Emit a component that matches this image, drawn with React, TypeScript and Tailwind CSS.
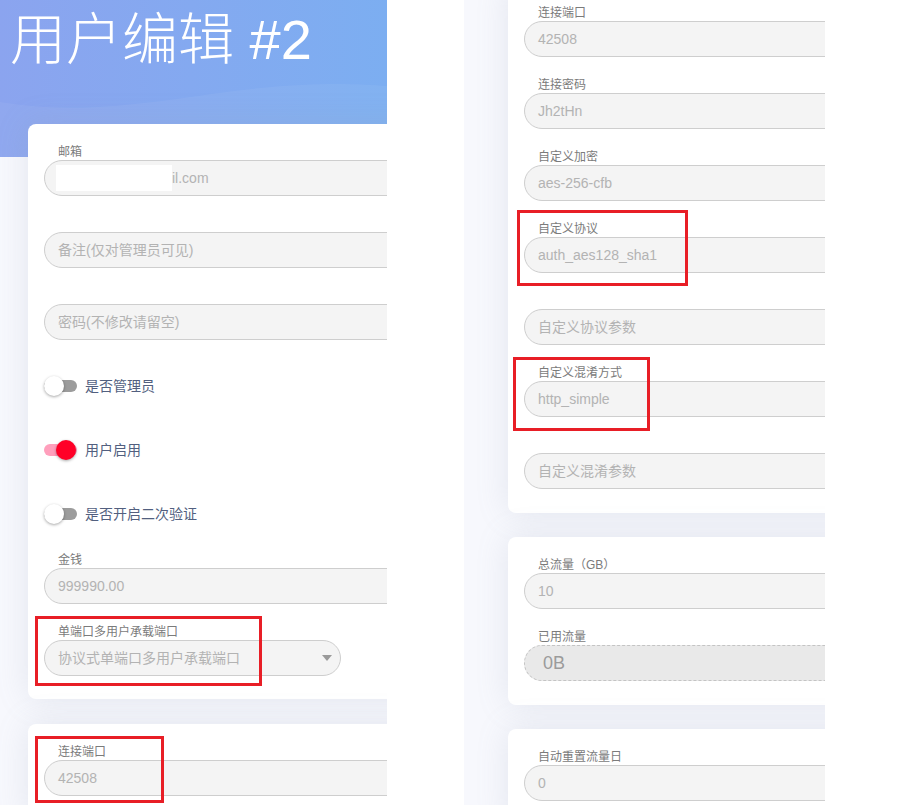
import React from "react";

function Label({ children }: { children: React.ReactNode }) {
  return (
    <div className="h-[16px] pl-[14px] text-[12px] leading-[16px] text-[#7b7b7b] whitespace-nowrap">
      {children}
    </div>
  );
}

function Input({ text, className = "" }: { text: React.ReactNode; className?: string }) {
  return (
    <div
      className={
        "h-[36px] rounded-full border border-[#cecece] bg-[#f4f4f4] flex items-center pl-[13px] text-[14px] text-[#b3b3b3] whitespace-nowrap " +
        className
      }
    >
      {text}
    </div>
  );
}

function Toggle({ on, label, className = "" }: { on: boolean; label: string; className?: string }) {
  return (
    <div className={"h-[24px] flex items-center " + className}>
      <div className="relative w-[33px] h-[20px]">
        <div
          className={
            "absolute left-0 top-[4px] w-[33px] h-[12px] rounded-full " +
            (on ? "bg-[#ff9fbc]" : "bg-[#9c9c9c]")
          }
        />
        <div
          className={
            "absolute top-0 w-[20px] h-[20px] rounded-full shadow-[0_1px_3px_rgba(0,0,0,0.35)] " +
            (on ? "left-[12px] bg-[#ff0027]" : "left-0 bg-white")
          }
        />
      </div>
      <span className="ml-[8px] text-[14px] text-[#525f7f] leading-[20px]">{label}</span>
    </div>
  );
}

const card = "relative bg-white rounded-[8px] shadow-[0_0_32px_0_rgba(136,152,170,0.18)]";

export default function App() {
  return (
    <div className="relative w-[909px] h-[805px] bg-white flex overflow-hidden font-['Liberation_Sans','Noto_Sans_CJK_SC',sans-serif]">
      {/* Left screenshot */}
      <div className="w-[387px] h-[805px] shrink-0 overflow-hidden bg-[#f7f8fd]">
        <div className="relative h-[157px] bg-gradient-to-r from-[#8ba4ef] to-[#7caef1] overflow-hidden">
          <svg className="absolute left-0 top-0" width="387" height="157" viewBox="0 0 387 157">
            <path d="M0 102 C 90 118, 180 96, 260 88 C 320 82, 360 84, 387 86 L387 157 L0 157 Z" fill="#ffffff" fillOpacity="0.05" />
          </svg>
          <div className="relative pl-[10px] pt-[8px] text-[56px] leading-[64px] font-light text-white whitespace-nowrap font-['Liberation_Sans','Noto_Sans_CJK_SC',sans-serif]">
            用户编辑 #2
          </div>
        </div>

        <div className={card + " -mt-[33px] ml-[28px] w-[420px] pt-[20px] pb-[23px] pl-[16px] pr-[16px]"}>
          <Label>邮箱</Label>
          <Input
            text={
              <>
                <span className="ml-[-2px] w-[116px] h-[26px] bg-white shrink-0" />
                <span>il.com</span>
              </>
            }
          />
          <Input className="mt-[36px]" text="备注(仅对管理员可见)" />
          <Input className="mt-[36px]" text="密码(不修改请留空)" />
          <Toggle className="mt-[34px]" on={false} label="是否管理员" />
          <Toggle className="mt-[40px]" on={true} label="用户启用" />
          <Toggle className="mt-[40px]" on={false} label="是否开启二次验证" />
          <div className="mt-[26px]">
            <Label>金钱</Label>
          </div>
          <Input text="999990.00" />
          <div className="mt-[20px]">
            <Label>单端口多用户承载端口</Label>
          </div>
          <div className="w-[297px] h-[36px] rounded-full border border-[#cecece] bg-[#f4f4f4] flex items-center justify-between pl-[13px] pr-[8px] text-[14px] text-[#b3b3b3] whitespace-nowrap">
            <span>协议式单端口多用户承载端口</span>
            <svg width="10" height="6" viewBox="0 0 10 6">
              <path d="M0 0 L10 0 L5 6 Z" fill="#9a9a9a" />
            </svg>
          </div>
        </div>

        <div className={card + " mt-[25px] ml-[28px] w-[420px] pt-[20px] pb-[23px] pl-[16px] pr-[16px]"}>
          <Label>连接端口</Label>
          <Input text="42508" />
        </div>
      </div>

      {/* Right screenshot */}
      <div className="ml-[77px] w-[361px] h-[805px] shrink-0 overflow-hidden bg-[#f7f8fd]">
        <div className={card + " -mt-[15px] ml-[44px] w-[400px] pt-[20px] pb-[24px] pl-[16px] pr-[16px]"}>
          <Label>连接端口</Label>
          <Input text="42508" />
          <div className="mt-[20px]">
            <Label>连接密码</Label>
          </div>
          <Input text="Jh2tHn" />
          <div className="mt-[20px]">
            <Label>自定义加密</Label>
          </div>
          <Input text="aes-256-cfb" />
          <div className="mt-[20px]">
            <Label>自定义协议</Label>
          </div>
          <Input text="auth_aes128_sha1" />
          <Input className="mt-[36px]" text="自定义协议参数" />
          <div className="mt-[20px]">
            <Label>自定义混淆方式</Label>
          </div>
          <Input text="http_simple" />
          <Input className="mt-[36px]" text="自定义混淆参数" />
        </div>

        <div className={card + " mt-[24px] ml-[44px] w-[400px] pt-[20px] pb-[24px] pl-[16px] pr-[16px]"}>
          <Label>总流量（GB）</Label>
          <Input text="10" />
          <div className="mt-[20px]">
            <Label>已用流量</Label>
          </div>
          <div className="h-[36px] rounded-full border border-dashed border-[#c4c4c4] bg-[#e9e9e9] flex items-center pl-[18px] text-[18px] text-[#9b9b9b]">
            0B
          </div>
        </div>

        <div className={card + " mt-[24px] ml-[44px] w-[400px] pt-[20px] pb-[24px] pl-[16px] pr-[16px]"}>
          <Label>自动重置流量日</Label>
          <Input text="0" />
        </div>
      </div>

      {/* Red annotation boxes */}
      <div className="absolute left-[35px] top-[616px] w-[227px] h-[70px] border-[3px] border-[#e81e26]" />
      <div className="absolute left-[35px] top-[736px] w-[129px] h-[67px] border-[3px] border-[#e81e26]" />
      <div className="absolute left-[517px] top-[210px] w-[171px] h-[76px] border-[3px] border-[#e81e26]" />
      <div className="absolute left-[513px] top-[357px] w-[137px] h-[74px] border-[3px] border-[#e81e26]" />
    </div>
  );
}
